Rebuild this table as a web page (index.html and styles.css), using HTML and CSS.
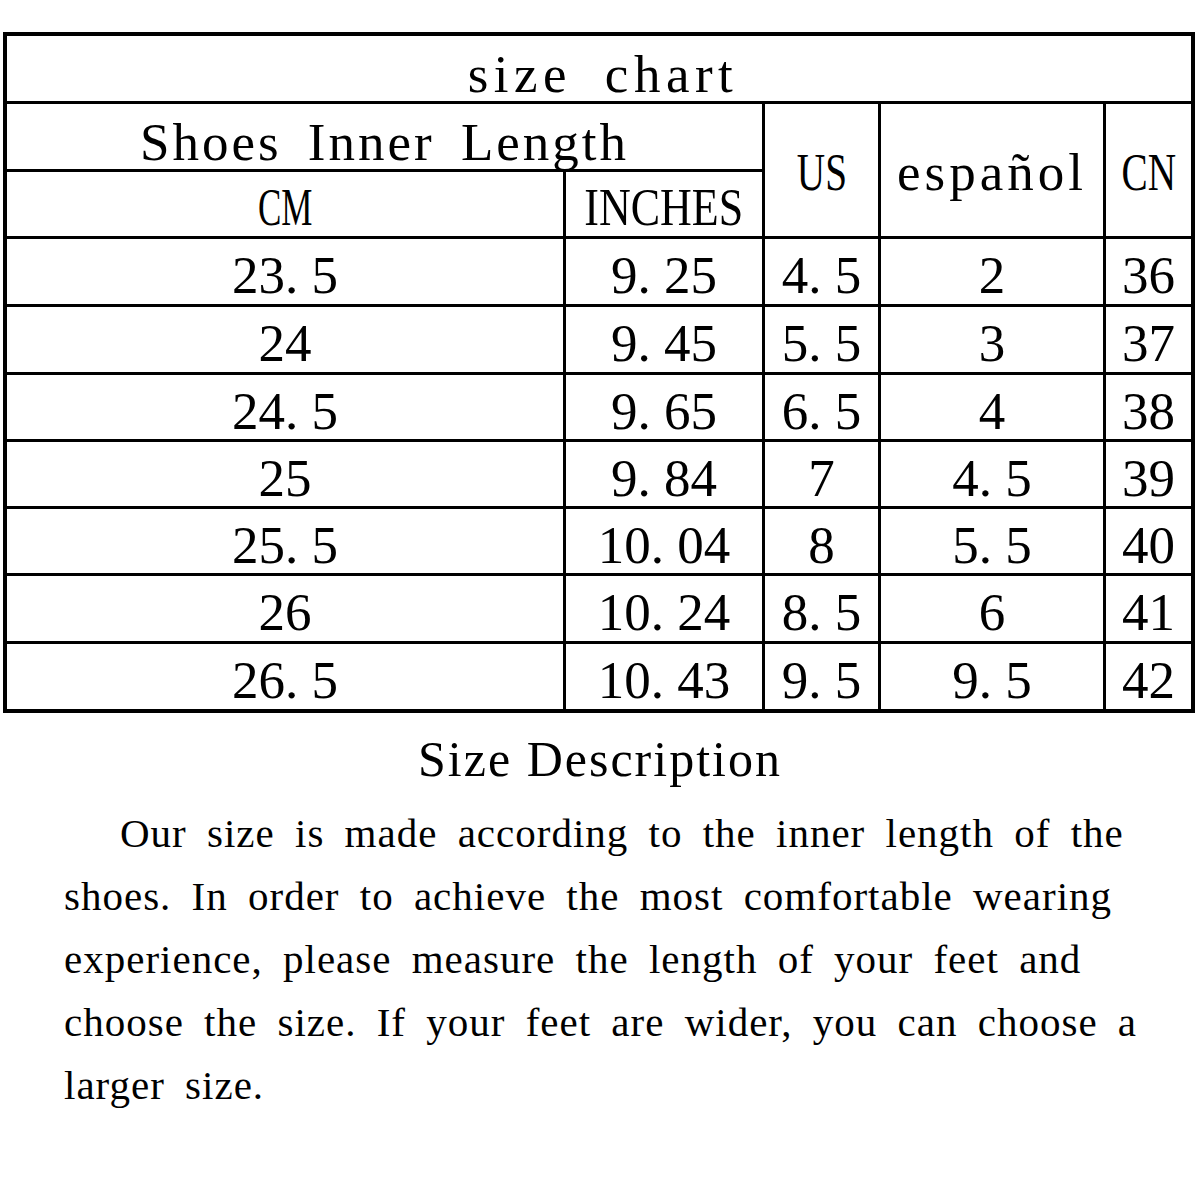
FILE: index.html
```html
<!DOCTYPE html>
<html lang="en">
<head>
<meta charset="utf-8">
<title>size chart</title>
<link rel="stylesheet" href="styles.css">
</head>
<body>
<div class="chart">
  <div class="cell title">size chart</div>
  <div class="cell group">Shoes Inner Length</div>
  <div class="cell tall"><span class="narrow">US</span></div>
  <div class="cell tall spanish">español</div>
  <div class="cell tall"><span class="narrow">CN</span></div>
  <div class="cell sub"><span class="narrow-cm">CM</span></div>
  <div class="cell sub"><span class="narrow-i">INCHES</span></div>

  <div class="cell num">23<span class="dot">.</span>5</div>
  <div class="cell num">9<span class="dot">.</span>25</div>
  <div class="cell num">4<span class="dot">.</span>5</div>
  <div class="cell num">2</div>
  <div class="cell num">36</div>

  <div class="cell num">24</div>
  <div class="cell num">9<span class="dot">.</span>45</div>
  <div class="cell num">5<span class="dot">.</span>5</div>
  <div class="cell num">3</div>
  <div class="cell num">37</div>

  <div class="cell num">24<span class="dot">.</span>5</div>
  <div class="cell num">9<span class="dot">.</span>65</div>
  <div class="cell num">6<span class="dot">.</span>5</div>
  <div class="cell num">4</div>
  <div class="cell num">38</div>

  <div class="cell num">25</div>
  <div class="cell num">9<span class="dot">.</span>84</div>
  <div class="cell num">7</div>
  <div class="cell num">4<span class="dot">.</span>5</div>
  <div class="cell num">39</div>

  <div class="cell num">25<span class="dot">.</span>5</div>
  <div class="cell num">10<span class="dot">.</span>04</div>
  <div class="cell num">8</div>
  <div class="cell num">5<span class="dot">.</span>5</div>
  <div class="cell num">40</div>

  <div class="cell num">26</div>
  <div class="cell num">10<span class="dot">.</span>24</div>
  <div class="cell num">8<span class="dot">.</span>5</div>
  <div class="cell num">6</div>
  <div class="cell num">41</div>

  <div class="cell num">26<span class="dot">.</span>5</div>
  <div class="cell num">10<span class="dot">.</span>43</div>
  <div class="cell num">9<span class="dot">.</span>5</div>
  <div class="cell num">9<span class="dot">.</span>5</div>
  <div class="cell num">42</div>
</div>

<h2 class="desc-title">Size Description</h2>
<p class="desc"><span class="first">Our size is made according to the inner length of the</span><br>shoes. In order to achieve the most comfortable wearing<br>experience, please measure the length of your feet and<br>choose the size. If your feet are wider, you can choose a<br>larger size.</p>
</body>
</html>
```

FILE: styles.css
```css
body {
  margin: 0;
  background: #fff;
  color: #000;
  font-family: "Liberation Serif", "Times New Roman", serif;
}

.chart {
  display: grid;
  width: max-content;
  margin: 32px 0 0 3px;
  border: 4px solid #000;
  background: #000;
  gap: 3px;
  grid-template-columns: 556px 196px 113px 222px 85px;
  grid-template-rows: 65px 65px 64px 65px 65px 64px 64px 64px 65px 65px;
}

.cell {
  background: #fff;
  display: flex;
  align-items: center;
  justify-content: center;
  font-size: 53px;
  line-height: 61px;
  white-space: nowrap;
}

.title {
  grid-column: 1 / -1;
  padding-top: 11px;
  padding-left: 8px;
  letter-spacing: 5.5px;
  word-spacing: 14px;
}

.group {
  grid-column: span 2;
  padding-top: 11px;
  letter-spacing: 3px;
  word-spacing: 10px;
}

.tall {
  grid-row: span 2;
  padding-top: 4px;
}

.spanish {
  letter-spacing: 4px;
}

.sub {
  padding-top: 6px;
}

.num {
  padding-top: 8px;
}

.dot {
  padding-right: 0.25em;
}

.narrow {
  display: inline-block;
  transform: scaleX(0.74);
}

.narrow-cm {
  display: inline-block;
  transform: scaleX(0.66);
}

.narrow-i {
  display: inline-block;
  transform: scaleX(0.83);
}

.desc-title {
  margin: 16px 0 0;
  text-align: center;
  font-size: 50px;
  line-height: 60px;
  font-weight: normal;
  letter-spacing: 2px;
}

.desc {
  margin: 13px 0 0 64px;
  font-size: 41px;
  line-height: 63px;
  letter-spacing: 1px;
  word-spacing: 9px;
  white-space: nowrap;
}

.first {
  margin-left: 56px;
}
```
